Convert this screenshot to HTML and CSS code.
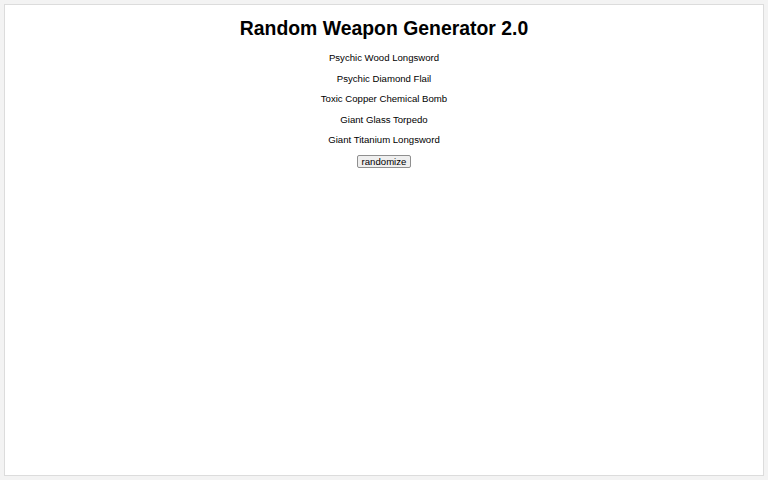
FILE: index.html
```html
<!DOCTYPE html>
<html lang="en">
<head>
    <meta charset="UTF-8" />
    <meta name="viewport" content="width=device-width, initial-scale=1.0" />
    <title>Random Weapon Generator 2.0</title>
    <link rel="stylesheet" href="styles.css">
</head>
<body>
    <div class="page">
        <h1>Random Weapon Generator 2.0</h1>
        <div id="weapons">
            <p class="weapon">Psychic Wood Longsword</p>
            <p class="weapon">Psychic Diamond Flail</p>
            <p class="weapon">Toxic Copper Chemical Bomb</p>
            <p class="weapon">Giant Glass Torpedo</p>
            <p class="weapon">Giant Titanium Longsword</p>
        </div>
        <button id="randomize">randomize</button>
    </div>
</body>
</html>
```

FILE: styles.css
```css
* {
    box-sizing: border-box;
}

html, body {
    height: 100%;
}

body {
    margin: 0;
    padding: 4px;
    background: #f3f3f3;
    font-family: 'Liberation Sans', Arial, sans-serif;
    color: #000;
}

.page {
    height: 100%;
    background: #fff;
    border: 1px solid #dcdcdc;
    text-align: center;
    padding-top: 12px;
}

h1 {
    font-size: 19.4px;
    margin: 0 0 12px;
}

.weapon {
    font-size: 9.6px;
    line-height: 11px;
    margin: 0 0 9.5px;
}

.weapon:last-child {
    margin-bottom: 5.5px;
}

#randomize {
    font-family: 'Liberation Sans', Arial, sans-serif;
    font-size: 9.6px;
    line-height: 11px;
    padding: 0 4px;
    border: 1px solid #8f8f8f;
    border-radius: 2px;
    background: #efefef;
}
```
